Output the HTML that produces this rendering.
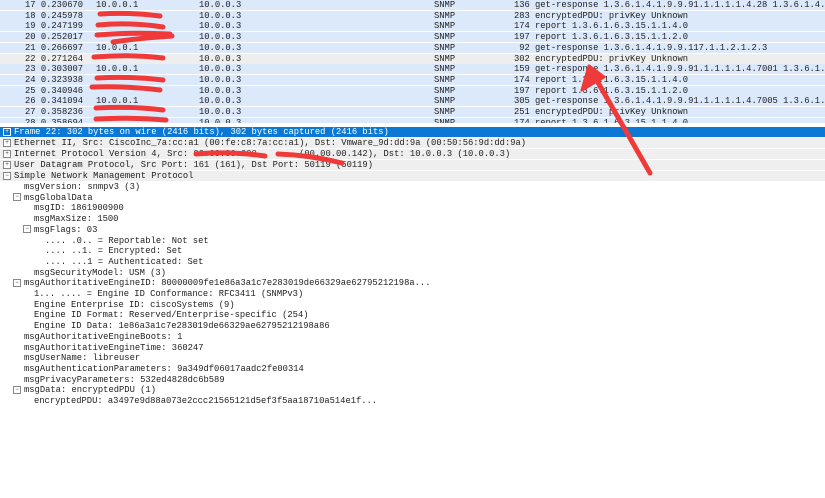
<!DOCTYPE html>
<html><head><style>
body{margin:0;width:825px;height:498px;background:#fff;overflow:hidden;position:relative;font-family:"Liberation Mono","DejaVu Sans Mono",monospace;font-size:8.8px;color:#222}
.r{position:absolute;left:0;width:825px;height:10px;background:#dbe9fb;white-space:pre;line-height:10px}
.r span{position:absolute}
.sel{background:#eeeeee}
.h{position:absolute;left:0;width:825px;height:10px;background:#efefef;border-bottom:1px solid #fff;white-space:pre;line-height:10px}
.t{position:absolute;white-space:pre;line-height:10px}
.bx{display:inline-block;width:6px;height:6px;border:1px solid #888;font-size:6px;line-height:6px;text-align:center;vertical-align:middle;margin-right:3px;color:#444;background:#fff}
</style></head><body>
<div id="list"></div>
<div class="h" style="top:127px;background:#0a78d4;color:#fff"><span style="position:absolute;left:3px"><span class="bx" style="border-color:#fff;background:#0a78d4;color:#fff">+</span>Frame 22: 302 bytes on wire (2416 bits), 302 bytes captured (2416 bits)</span></div>
<div class="h" style="top:138px"><span style="position:absolute;left:3px"><span class="bx">+</span>Ethernet II, Src: CiscoInc_7a:cc:a1 (00:fe:c8:7a:cc:a1), Dst: Vmware_9d:dd:9a (00:50:56:9d:dd:9a)</span></div>
<div class="h" style="top:149px"><span style="position:absolute;left:3px"><span class="bx">+</span>Internet Protocol Version 4, Src: 00.00.00.000        (00.00.00.142), Dst: 10.0.0.3 (10.0.0.3)</span></div>
<div class="h" style="top:160px"><span style="position:absolute;left:3px"><span class="bx">+</span>User Datagram Protocol, Src Port: 161 (161), Dst Port: 50119 (50119)</span></div>
<div class="h" style="top:171px"><span style="position:absolute;left:3px"><span class="bx">−</span>Simple Network Management Protocol</span></div>
<div id="tree"></div>
<svg width="825" height="498" style="position:absolute;left:0;top:0" fill="none" stroke="#f03a3a" stroke-linecap="round" stroke-width="5">
<path d="M100 14 Q130 12 160 16" /><path d="M98 25 Q130 22 163 27"/><path d="M97 35 Q130 32 170 34 M113 42 Q140 38 172 36"/>
<path d="M94 57 Q130 54 163 58"/><path d="M97 78 Q130 76 163 80"/><path d="M92 87 Q130 86 160 90"/>
<path d="M96 108 Q130 106 163 110"/><path d="M96 119 Q130 117 166 120"/>
<path d="M196 154 Q230 151 265 156"/><path d="M278 154 Q310 155 342 163"/>
<path d="M650 173 L592 72" stroke-width="5"/>
<path d="M589 66 L582 90 L604 77 Z" fill="#f03a3a" stroke-width="3" stroke-linejoin="round"/>
</svg>
<script>
var rows=[["17","0.230670","10.0.0.1","136","get-response 1.3.6.1.4.1.9.9.91.1.1.1.1.4.28 1.3.6.1.4.1"],
["18","0.245978","","283","encryptedPDU: privKey Unknown"],
["19","0.247199","","174","report 1.3.6.1.6.3.15.1.1.4.0"],
["20","0.252017","","197","report 1.3.6.1.6.3.15.1.1.2.0"],
["21","0.266697","10.0.0.1"," 92","get-response 1.3.6.1.4.1.9.9.117.1.1.2.1.2.3"],
["22","0.271264","","302","encryptedPDU: privKey Unknown"],
["23","0.303007","10.0.0.1","159","get-response 1.3.6.1.4.1.9.9.91.1.1.1.1.4.7001 1.3.6.1.4"],
["24","0.323938","","174","report 1.3.6.1.6.3.15.1.1.4.0"],
["25","0.340946","","197","report 1.3.6.1.6.3.15.1.1.2.0"],
["26","0.341094","10.0.0.1","305","get-response 1.3.6.1.4.1.9.9.91.1.1.1.1.4.7005 1.3.6.1.4"],
["27","0.358236","","251","encryptedPDU: privKey Unknown"],
["28","0.358694","","174","report 1.3.6.1.6.3.15.1.1.4.0"]];
var h="";rows.forEach(function(r,i){var top=i*10.7;var hh=(i==11)?5:10;
h+='<div class="r'+(i==5?' sel':'')+'" style="top:'+top.toFixed(1)+'px;height:'+hh+'px;overflow:hidden"><span style="left:25px">'+r[0]+' '+r[1]+'</span><span style="left:96px">'+r[2]+'</span><span style="left:199px">10.0.0.3</span><span style="left:434px">SNMP</span><span style="left:514px">'+r[3]+'</span><span style="left:535px">'+r[4]+'</span></div>';});
document.getElementById("list").innerHTML=h;
var t=[[24,"","msgVersion: snmpv3 (3)"],[13,"−","msgGlobalData"],[34,"","msgID: 1861900900"],[34,"","msgMaxSize: 1500"],[23,"−","msgFlags: 03"],[45,"",".... .0.. = Reportable: Not set"],[45,"",".... ..1. = Encrypted: Set"],[45,"",".... ...1 = Authenticated: Set"],[34,"","msgSecurityModel: USM (3)"],[13,"−","msgAuthoritativeEngineID: 80000009fe1e86a3a1c7e283019de66329ae62795212198a..."],[34,"","1... .... = Engine ID Conformance: RFC3411 (SNMPv3)"],[34,"","Engine Enterprise ID: ciscoSystems (9)"],[34,"","Engine ID Format: Reserved/Enterprise-specific (254)"],[34,"","Engine ID Data: 1e86a3a1c7e283019de66329ae62795212198a86"],[24,"","msgAuthoritativeEngineBoots: 1"],[24,"","msgAuthoritativeEngineTime: 360247"],[24,"","msgUserName: libreuser"],[24,"","msgAuthenticationParameters: 9a349df06017aadc2fe00314"],[24,"","msgPrivacyParameters: 532ed4828dc6b589"],[13,"−","msgData: encryptedPDU (1)"],[34,"","encryptedPDU: a3497e9d88a073e2ccc21565121d5ef3f5aa18710a514e1f..."]];
h="";t.forEach(function(r,i){h+='<div class="t" style="top:'+(182+i*10.7).toFixed(1)+'px;left:'+r[0]+'px">'+(r[1]?'<span class="bx">'+r[1]+'</span>':'')+r[2]+'</div>';});
document.getElementById("tree").innerHTML=h;
</script>
</body></html>
